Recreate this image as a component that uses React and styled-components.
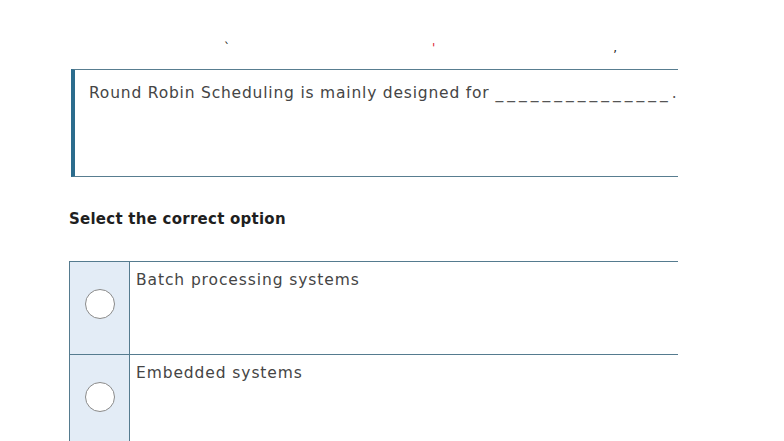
import React from 'react';
import styled, { createGlobalStyle } from 'styled-components';

const GlobalStyle = createGlobalStyle`
  html, body {
    margin: 0;
    padding: 0;
    background: #ffffff;
  }
  body {
    font-family: "DejaVu Sans", "Liberation Sans", sans-serif;
    overflow: hidden;
  }
`;

const Page = styled.div`
  width: 784px;
  height: 441px;
  padding-left: 69px;
  box-sizing: border-box;
  overflow: hidden;
`;

const Column = styled.div`
  width: 609px;
`;

const Marks = styled.div`
  height: 69px;
  display: flex;
  align-items: flex-start;
  padding-top: 43px;
  box-sizing: border-box;
  font-size: 12px;
  line-height: 10px;
  color: #222;
`;

const Mark = styled.span`
  margin-left: ${(p) => p.$left}px;
  color: ${(p) => p.$color || '#222'};
`;

const QuestionBox = styled.div`
  margin-left: 2px;
  height: 108px;
  box-sizing: border-box;
  border-left: 4px solid #2b6c8d;
  border-top: 1px solid #587d90;
  border-bottom: 1px solid #587d90;
  padding: 14px 14px;
  font-size: 15.5px;
  letter-spacing: 0.8px;
  color: #454545;
  white-space: nowrap;
`;

const Blank = styled.span`
  margin-left: 6px;
  letter-spacing: 4px;
  color: #555;
`;

const Title = styled.h2`
  margin: 0;
  padding-top: 33px;
  height: 84px;
  box-sizing: border-box;
  font-size: 15px;
  font-weight: 700;
  letter-spacing: 0.25px;
  color: #1f1f1f;
`;

const Options = styled.div`
  border-top: 1px solid #557b8f;
  border-left: 1px solid #557b8f;
`;

const OptionRow = styled.div`
  display: flex;
  height: 92px;
  border-bottom: 1px solid #557b8f;
`;

const RadioCell = styled.div`
  width: 60px;
  flex: none;
  background: #e3ecf6;
  border-right: 1px solid #557b8f;
  display: flex;
  align-items: flex-start;
  justify-content: center;
  padding-top: 27px;
  box-sizing: border-box;
`;

const Radio = styled.span`
  width: 28px;
  height: 28px;
  border-radius: 50%;
  border: 1.5px solid #8a8a8a;
  background: #ffffff;
  display: block;
`;

const OptionText = styled.div`
  padding: 9px 6px;
  font-size: 15.5px;
  letter-spacing: 0.9px;
  color: #454545;
`;

const options = ['Batch processing systems', 'Embedded systems'];

export default function App() {
  return (
    <>
      <GlobalStyle />
      <Page>
        <Column>
          <Marks>
            <Mark $left={155}>`</Mark>
            <Mark $left={202} $color="#d23">'</Mark>
            <Mark $left={178}>,</Mark>
          </Marks>
          <QuestionBox>
            Round Robin Scheduling is mainly designed for
            <Blank>_______________.</Blank>
          </QuestionBox>
          <Title>Select the correct option</Title>
          <Options>
            {options.map((o) => (
              <OptionRow key={o}>
                <RadioCell>
                  <Radio />
                </RadioCell>
                <OptionText>{o}</OptionText>
              </OptionRow>
            ))}
          </Options>
        </Column>
      </Page>
    </>
  );
}
